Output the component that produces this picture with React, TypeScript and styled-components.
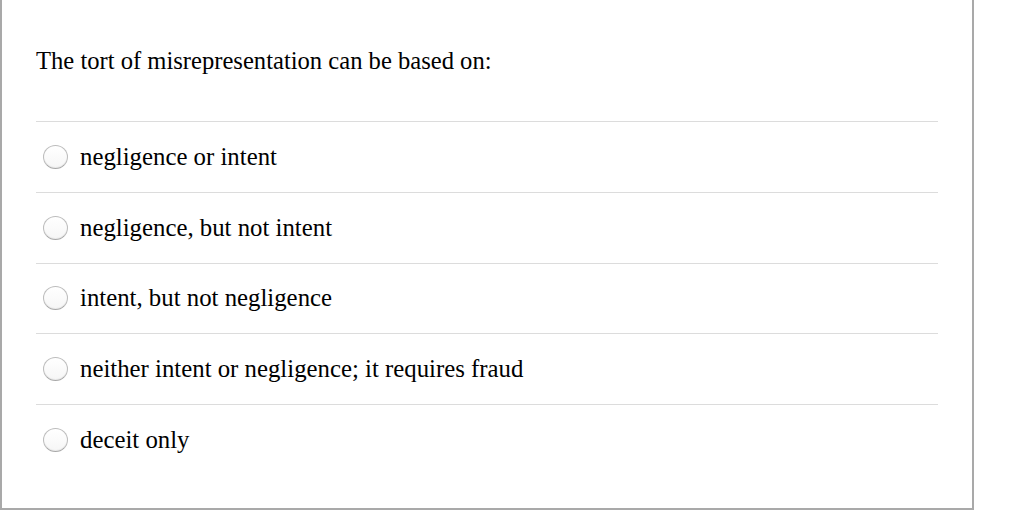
import styled, { createGlobalStyle } from 'styled-components';

const options = [
    'negligence or intent',
    'negligence, but not intent',
    'intent, but not negligence',
    'neither intent or negligence; it requires fraud',
    'deceit only',
];

const GlobalStyle = createGlobalStyle`
    html, body {
        margin: 0;
        padding: 0;
        background: #ffffff;
    }
    body {
        font-family: 'Liberation Serif', 'Times New Roman', serif;
        color: #000000;
    }
`;

const App = () => {
    return (
        <>
            <GlobalStyle />
            <QuestionCard>
                <QuestionText>The tort of misrepresentation can be based on:</QuestionText>
                <OptionList>
                    {options.map((text) => (
                        <OptionRow key={text}>
                            <RadioCircle />
                            <OptionLabel>{text}</OptionLabel>
                        </OptionRow>
                    ))}
                </OptionList>
            </QuestionCard>
        </>
    );
};

const QuestionCard = styled.section`
    box-sizing: border-box;
    width: 974px;
    height: 510px;
    padding: 47px 34px 0 34px;
    border: 2px solid #a9a9a9;
    border-top: none;
    background: #ffffff;
`;

const QuestionText = styled.p`
    margin: 0 0 46px;
    font-size: 24.6px;
    line-height: 28px;
`;

const OptionList = styled.div`
    display: flex;
    flex-direction: column;
`;

const OptionRow = styled.label`
    box-sizing: border-box;
    display: flex;
    align-items: center;
    height: 70.75px;
    padding-left: 7px;
    border-top: 1px solid #dcdcdc;
`;

const RadioCircle = styled.span`
    box-sizing: border-box;
    flex: none;
    width: 25px;
    height: 24px;
    margin-right: 12px;
    border-radius: 50%;
    border: 1px solid #bdbdbd;
    border-bottom-color: #a8a8a8;
    background: linear-gradient(#ffffff, #f6f6f6);
    box-shadow: inset 0 -1px 1px rgba(0, 0, 0, 0.06);
`;

const OptionLabel = styled.span`
    font-size: 24.8px;
    line-height: 28px;
`;

export default App;
